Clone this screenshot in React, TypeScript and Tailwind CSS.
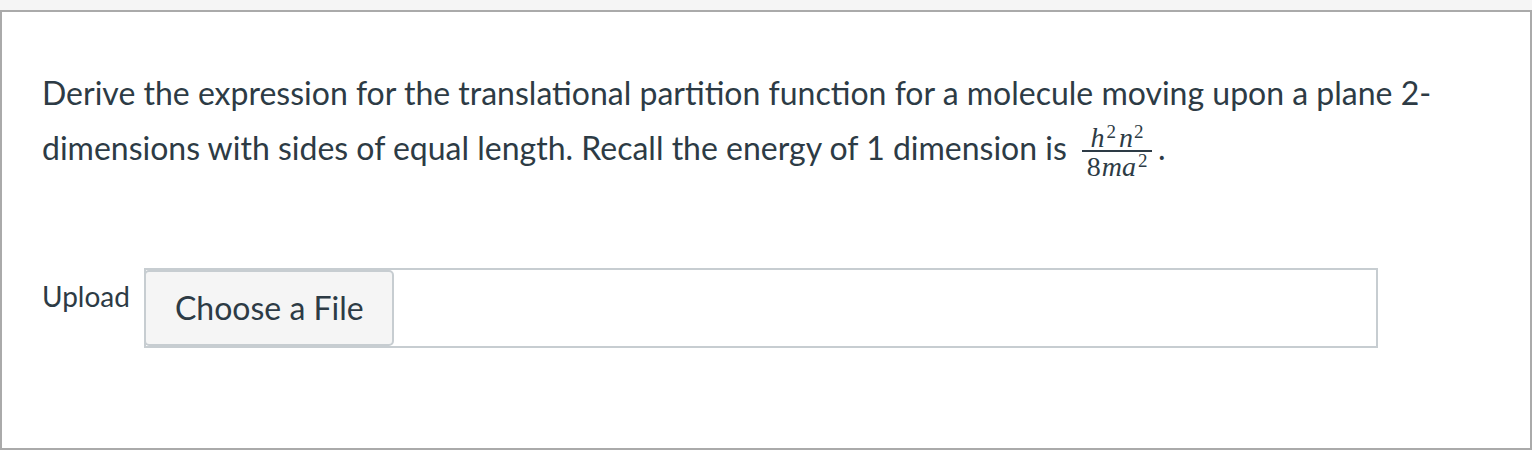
export default function App() {
  return (
    <div className="w-[1536px] h-[462px] bg-white font-['Lato','Liberation_Sans',sans-serif] text-[#2d3b45]">
      {/* strip left over from the question header */}
      <div className="w-[1532px] h-[10px] bg-[#f5f5f5]" />

      <div className="w-[1532px] h-[440px] border-2 border-[#aaaaaa] bg-white px-[40px] pt-[57px]">
        <p className="text-[32px] leading-[48px]">
          Derive the expression for the translational partition function for a molecule moving upon a plane 2-dimensions
          with sides of equal length. Recall the energy of 1 dimension is <Fraction />
          <span className="ml-[6px]">.</span>
        </p>

        <div className="flex items-start gap-[14px] mt-[89px]">
          <span className="mt-[7px] text-[28px] leading-[42px]">Upload</span>
          <div className="w-[1234px] h-[80px] border-2 border-[#c7cdd1] flex items-center">
            <button
              type="button"
              className="h-[76px] w-[250px] -ml-[2px] rounded-[5px] border-2 border-[#c7cdd1] bg-[#f5f5f5] text-left pl-[29px] text-[32px] text-[#2d3b45]"
            >
              Choose a File
            </button>
          </div>
        </div>
      </div>
    </div>
  );
}

function Fraction() {
  return (
    <span className="inline-block align-[-16px] w-[70px] text-center ml-[7px] font-['Liberation_Serif',serif] text-[28px]">
      <span className="block pt-[9px] leading-[24px] italic">
        h<sup className="not-italic ml-[2px] text-[19px] leading-none">2</sup>
        <span className="ml-[3px]">n</span>
        <sup className="not-italic ml-[1px] text-[19px] leading-none">2</sup>
      </span>
      <span className="block border-t-2 border-[#2d3b45] pt-[3px] leading-[24px]">
        8<span className="italic ml-[1px]">ma</span>
        <sup className="ml-[2px] text-[19px] leading-none">2</sup>
      </span>
    </span>
  );
}
